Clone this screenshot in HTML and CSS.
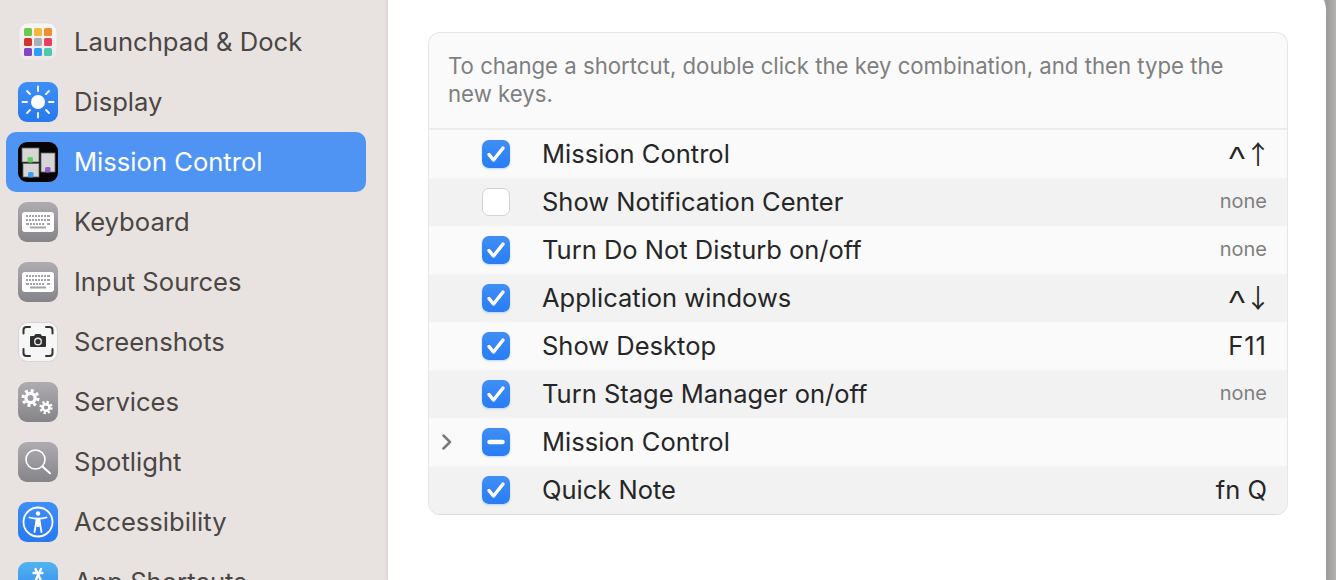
FILE: index.html
```html
<!DOCTYPE html>
<html lang="en">
<head>
<meta charset="utf-8">
<title>Mission Control</title>
<link rel="stylesheet" href="styles.css">
</head>
<body>
<div class="window">
<aside class="sidebar">
  <div class="nav-item">
    <svg class="app" viewBox="0 0 40 40"><defs><linearGradient id="lp" x1="0" y1="0" x2="0" y2="1"><stop offset="0" stop-color="#f8f6f5"/><stop offset="1" stop-color="#ebe7e6"/></linearGradient></defs>
      <rect x="1" y="1" width="38" height="38" rx="9" fill="url(#lp)" stroke="#e0dcda" stroke-width=".6"/>
      <rect x="6" y="6" width="8" height="8" rx="1.500" fill="#6cc84f"/><rect x="16" y="6" width="8" height="8" rx="1.500" fill="#f5b83d"/><rect x="26" y="6" width="8" height="8" rx="1.500" fill="#ee8f2f"/>
      <rect x="6" y="16" width="8" height="8" rx="1.500" fill="#d3352e"/><rect x="16" y="16" width="8" height="8" rx="1.500" fill="#a9afb2"/><rect x="26" y="16" width="8" height="8" rx="1.500" fill="#e9405f"/>
      <rect x="6" y="26" width="8" height="8" rx="1.500" fill="#8445c2"/><rect x="16" y="26" width="8" height="8" rx="1.500" fill="#2f9df2"/><rect x="26" y="26" width="8" height="8" rx="1.500" fill="#4fc9ae"/>
    </svg>
    <span class="nav-text">Launchpad &amp; Dock</span>
  </div>
  <div class="nav-item">
    <svg class="app" viewBox="0 0 40 40"><rect x="0" y="0" width="40" height="40" rx="9" fill="url(#blue)"/>
      <circle cx="20" cy="20" r="7" fill="#fff"/>
      <g stroke="#fff" stroke-width="1.800" stroke-linecap="round"><path d="M20 4.500v4.500M20 31v4.500M4.500 20H9M31 20h4.500M9 9l3 3M28 28l3 3M9 31l3-3M28 12l3-3"/></g>
    </svg>
    <span class="nav-text">Display</span>
  </div>
  <div class="nav-item active">
    <svg class="app" viewBox="0 0 40 40"><rect x="0" y="0" width="40" height="40" rx="9" fill="#050505"/>
      <rect x="4" y="6" width="17" height="14" fill="#d6d6d6" stroke="#666" stroke-width=".8"/>
      <rect x="5" y="21.500" width="16" height="13.500" fill="#d6d6d6" stroke="#666" stroke-width=".8"/>
      <rect x="23" y="11" width="14" height="19" fill="#d6d6d6" stroke="#666" stroke-width=".8"/>
      <rect x="9.500" y="15" width="5.500" height="5.500" rx="1.500" fill="#62d05a"/>
      <rect x="10" y="30" width="5.500" height="5.500" rx="1.500" fill="#3aa0f4"/>
      <rect x="27" y="25" width="5.500" height="5.500" rx="1.500" fill="#9b59d0"/>
    </svg>
    <span class="nav-text">Mission Control</span>
  </div>
  <div class="nav-item">
    <svg class="app" viewBox="0 0 40 40"><use href="#kbd"/></svg>
    <span class="nav-text">Keyboard</span>
  </div>
  <div class="nav-item">
    <svg class="app" viewBox="0 0 40 40"><use href="#kbd"/></svg>
    <span class="nav-text">Input Sources</span>
  </div>
  <div class="nav-item">
    <svg class="app" viewBox="0 0 40 40"><rect x=".5" y=".5" width="39" height="39" rx="9" fill="#f6f6f6" stroke="#d4d4d4"/>
      <path d="M5.500 11.500V8a3 3 0 0 1 3-3H12M28 5h3.500a3 3 0 0 1 3 3v3.500M34.500 27v4a3 3 0 0 1-3 3H28M12 34H8.500a3 3 0 0 1-3-3v-4" fill="none" stroke="#333" stroke-width="2" stroke-linecap="round"/>
      <path d="M13 14h3l1.500-2h5l1.500 2h3a1 1 0 0 1 1 1v9a1 1 0 0 1-1 1H13a1 1 0 0 1-1-1v-9a1 1 0 0 1 1-1z" fill="#2f2f31"/>
      <circle cx="20" cy="19.500" r="3.300" fill="none" stroke="#e8e8e8" stroke-width="1.400"/>
    </svg>
    <span class="nav-text">Screenshots</span>
  </div>
  <div class="nav-item">
    <svg class="app" viewBox="0 0 40 40"><rect width="40" height="40" rx="9" fill="url(#grey)"/>
      <g fill="none" stroke="#fff"><circle cx="12.500" cy="16" r="4.600" stroke-width="3.200"/><circle cx="12.500" cy="16" r="7.500" stroke-width="3" stroke-dasharray="3 2.890"/>
      <circle cx="28" cy="25.500" r="3.400" stroke-width="2.600"/><circle cx="28" cy="25.500" r="5.500" stroke-width="2.400" stroke-dasharray="2.200 2.120"/></g>
    </svg>
    <span class="nav-text">Services</span>
  </div>
  <div class="nav-item">
    <svg class="app" viewBox="0 0 40 40"><rect width="40" height="40" rx="9" fill="url(#grey)"/>
      <circle cx="17.500" cy="17.500" r="9.500" fill="none" stroke="#fff" stroke-width="1.600"/><path d="M24.500 24.500l7.500 6.800" stroke="#fff" stroke-width="2" stroke-linecap="round"/>
    </svg>
    <span class="nav-text">Spotlight</span>
  </div>
  <div class="nav-item">
    <svg class="app" viewBox="0 0 40 40"><rect width="40" height="40" rx="9" fill="url(#blue)"/>
      <circle cx="20" cy="20" r="14.500" fill="none" stroke="#fff" stroke-width="1.800"/>
      <circle cx="20" cy="11.500" r="2.200" fill="#fff"/>
      <path d="M11.500 15.500c5.500 1.500 11.500 1.500 17 0M16.500 30l1.800-10M23.500 30l-1.800-10" fill="none" stroke="#fff" stroke-width="1.800" stroke-linecap="round"/>
      <path d="M17.500 16.500h5v6.500l-1.500 2h-2l-1.500-2z" fill="#fff"/>
    </svg>
    <span class="nav-text">Accessibility</span>
  </div>
  <div class="nav-item">
    <svg class="app" viewBox="0 0 40 40"><defs><linearGradient id="as" x1="0" y1="0" x2="0" y2="1"><stop offset="0" stop-color="#52b4ee"/><stop offset="1" stop-color="#2e7ff1"/></linearGradient></defs>
      <rect width="40" height="40" rx="9" fill="url(#as)"/>
      <path d="M17.500 7l7 15M23 7l-7 15M15.500 11h9" stroke="#fff" stroke-width="2.400" stroke-linecap="round" fill="none"/>
    </svg>
    <span class="nav-text">App Shortcuts</span>
  </div>
</aside>
<main class="content">
  <section class="panel">
    <p class="hint">To change a shortcut, double click the key combination, and then type the new keys.</p>
    <div class="rows">
      <div class="row"><span class="disclosure"></span><span class="check on"><svg viewBox="0 0 28 28"><path d="M7 14.500l4.500 5.500L21 8"/></svg></span><span class="label">Mission Control</span><span class="keys"><span class="sym">^</span><span class="arrow">↑</span></span></div>
      <div class="row"><span class="disclosure"></span><span class="check"></span><span class="label">Show Notification Center</span><span class="keys none">none</span></div>
      <div class="row"><span class="disclosure"></span><span class="check on"><svg viewBox="0 0 28 28"><path d="M7 14.500l4.500 5.500L21 8"/></svg></span><span class="label">Turn Do Not Disturb on/off</span><span class="keys none">none</span></div>
      <div class="row"><span class="disclosure"></span><span class="check on"><svg viewBox="0 0 28 28"><path d="M7 14.500l4.500 5.500L21 8"/></svg></span><span class="label">Application windows</span><span class="keys"><span class="sym">^</span><span class="arrow">↓</span></span></div>
      <div class="row"><span class="disclosure"></span><span class="check on"><svg viewBox="0 0 28 28"><path d="M7 14.500l4.500 5.500L21 8"/></svg></span><span class="label">Show Desktop</span><span class="keys wide">F11</span></div>
      <div class="row"><span class="disclosure"></span><span class="check on"><svg viewBox="0 0 28 28"><path d="M7 14.500l4.500 5.500L21 8"/></svg></span><span class="label">Turn Stage Manager on/off</span><span class="keys none">none</span></div>
      <div class="row"><span class="disclosure"><svg viewBox="0 0 12 16"><path d="M2.500 1.500l6.500 6.500-6.500 6.500"/></svg></span><span class="check on minus"><svg viewBox="0 0 28 28"><path d="M7.500 14h13"/></svg></span><span class="label">Mission Control</span><span class="keys"></span></div>
      <div class="row"><span class="disclosure"></span><span class="check on"><svg viewBox="0 0 28 28"><path d="M7 14.500l4.500 5.500L21 8"/></svg></span><span class="label">Quick Note</span><span class="keys">fn Q</span></div>
    </div>
  </section>
</main>
<div class="desktop"></div>
</div>
<svg class="defs" width="0" height="0">
  <defs>
    <linearGradient id="grey" x1="0" y1="0" x2="0" y2="1"><stop offset="0" stop-color="#aeacb0"/><stop offset="1" stop-color="#858488"/></linearGradient>
    <linearGradient id="blue" x1="0" y1="0" x2="0" y2="1"><stop offset="0" stop-color="#3f8ff7"/><stop offset="1" stop-color="#2878f0"/></linearGradient>
    <g id="kbd">
      <rect width="40" height="40" rx="9" fill="url(#grey)"/>
      <rect x="4" y="10" width="32" height="20" rx="3" fill="#fff"/>
      <g fill="#a3a2a6">
        <path d="M8 13h2v2H8zM11 13h2v2h-2zM14 13h2v2h-2zM17 13h2v2h-2zM20 13h2v2h-2zM23 13h2v2h-2zM26 13h2v2h-2zM29 13h3v2h-3z"/>
        <path d="M8 17h2v2H8zM11 17h2v2h-2zM14 17h2v2h-2zM17 17h2v2h-2zM20 17h2v2h-2zM23 17h2v2h-2zM26 17h2v2h-2zM29 17h3v2h-3z"/>
        <path d="M8 21h3v2H8zM29 21h3v2h-3zM12 24.500h16v2H12z"/>
        <path d="M12 21h2v2h-2zM15 21h2v2h-2zM18 21h2v2h-2zM21 21h2v2h-2zM24 21h2v2h-2z"/>
      </g>
    </g>
  </defs>
</svg>
</body>
</html>
```
FILE: styles.css
```css
* { box-sizing: border-box; }
html, body { margin: 0; height: 100%; overflow: hidden; }
body { font-family: Inter, "Liberation Sans", sans-serif; background: #a9a8a8; }
.window { display: flex; height: 592px; width: 1336px; margin-top: -12px; }
.defs { position: absolute; }

.sidebar {
  width: 388px;
  flex: none;
  padding: 24px 21px 0 6px;
  background: #e8e3e0;
  border-right: 1px solid #dad6d3;
  box-shadow: inset -3px 0 3px -2px #dfdad7;
  overflow: hidden;
}
.nav-item {
  display: flex;
  align-items: center;
  gap: 16px;
  height: 60px;
  padding-left: 12px;
  border-radius: 10px;
  font-size: 25.6px;
  color: #4a4644;
  white-space: nowrap;
}
.nav-text { padding-bottom: 2px; }
.nav-item.active { background: #4f94f3; color: #fff; }
.app { width: 40px; height: 40px; flex: none; }

.content {
  flex: none;
  width: 938px;
  padding: 44px 0 0 40px;
  background: #fff;
  border-radius: 0 22px 0 0;
}
.panel {
  width: 860px;
  height: 483px;
  border: 1px solid #e6e6e6;
  border-bottom-color: #dcdcdc;
  border-radius: 12px;
  background: #fafafa;
  overflow: hidden;
}
.hint {
  margin: 0;
  height: 97px;
  padding: 19px 19px 0;
  border-bottom: 2px solid #ececec;
  font-size: 22.2px;
  line-height: 28px;
  color: #7f7f7f;
}
.row {
  display: flex;
  align-items: center;
  height: 48px;
  padding-right: 20px;
  font-size: 25.5px;
  color: #262626;
}
.row:nth-child(even) { background: #f2f2f2; }
.disclosure { width: 53px; flex: none; padding-left: 12px; display: flex; }
.disclosure svg { width: 12px; height: 16px; fill: none; stroke: #7a7a7a; stroke-width: 2.500; stroke-linecap: round; stroke-linejoin: round; }
.check {
  width: 28px;
  height: 28px;
  flex: none;
  border-radius: 7px;
  background: #fff;
  border: 1px solid #d2d2d2;
}
.check.on { background: linear-gradient(#3f8ff7, #2a7cf2); border: 0; box-shadow: 0 1px 2px rgba(40,120,240,.3); }
.check svg { display: block; width: 28px; height: 28px; fill: none; stroke: #fff; stroke-width: 3.500; stroke-linecap: round; stroke-linejoin: round; }
.check.minus svg { stroke-width: 4.500; }
.label { flex: 1; margin-left: 32px; padding-bottom: 2px; white-space: nowrap; }
.keys { display: flex; align-items: center; white-space: nowrap; padding-bottom: 2px; }
.keys.wide { letter-spacing: 1px; }
.keys.none { font-size: 20px; color: #7f7f7f; }
.sym { font-family: "Liberation Sans", sans-serif; font-size: 34px; line-height: 32px; padding-top: 10px; }
.arrow { font-family: "Noto Sans CJK JP", sans-serif; font-size: 26px; line-height: 32px; margin-right: -4px; }

.desktop { flex: 1; background: linear-gradient(90deg, #9b9a9a, #b3b2b1); }
```
